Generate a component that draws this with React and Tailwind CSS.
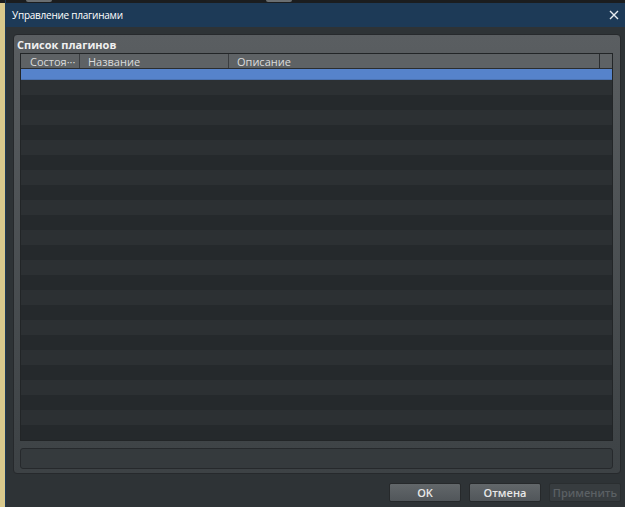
import React from "react";

const rows = Array.from({ length: 24 });

export default function App() {
  return (
    <div
      className="w-[628px] h-[507px] flex bg-white overflow-hidden"
      style={{ fontFamily: "'Open Sans', 'Liberation Sans', sans-serif" }}
    >
      {/* край окна сзади */}
      <div className="w-[5px] h-full flex flex-col">
        <div className="h-[3px] bg-[#1b1d1f]" />
        <div className="flex-1 bg-[#d9c98c]" />
      </div>
      <div className="w-px h-full bg-[#1d3a57]" />

      <div className="w-[619px] h-full flex flex-col bg-[#2e3336]">
        {/* полоска сверху */}
        <div className="h-[3px] bg-[#1b1d1f] flex">
          <div className="ml-[20px] w-[26px] h-[2px] rounded-b bg-[#6a6e71]" />
          <div className="ml-[214px] w-[26px] h-[2px] rounded-b bg-[#6a6e71]" />
        </div>

        {/* заголовок */}
        <div className="h-[24px] bg-[#1d3a57] flex items-center justify-between pl-[6px] pr-[5px]">
          <span className="text-[10px] text-white tracking-tight">Управление плагинами</span>
          <svg width="10" height="10" viewBox="0 0 10 10" className="mr-[1px]">
            <path d="M1 1 L9 9 M9 1 L1 9" stroke="#e8ecf0" strokeWidth="1.4" />
          </svg>
        </div>

        <div className="flex-1 flex flex-col pl-[7px] pr-[4px] pt-[7px]">
          {/* группа */}
          <div className="h-[440px] rounded-[4px] border border-[#26292c] bg-gradient-to-b from-[#5a5e61] to-[#3d4245] flex flex-col pl-[6px] pr-[7px]">
            <div className="h-[18px] pt-[3px] text-[11px] font-bold text-[#f0f0f0] leading-[14px] -ml-[3px]">
              Список плагинов
            </div>

            <div className="h-[388px] border border-[#222527] bg-[#25292c] flex flex-col overflow-hidden">
              <div className="h-[15px] flex bg-[#5e6265] text-[11px] text-[#dcdcdc] leading-[15px] border-b border-[#2a2d30]">
                <div className="w-[59px] pl-[9px] border-r border-[#3a3d40]">Состоя···</div>
                <div className="w-[149px] pl-[8px] border-r border-[#3a3d40]">Название</div>
                <div className="flex-1 pl-[8px] border-r border-[#2a2d30]">Описание</div>
                <div className="w-[12px]" />
              </div>
              <div className="h-[14px] bg-[#5683cb] border-b border-[#4b72b0]" />
              {rows.map((_, i) => (
                <div
                  key={i}
                  className={i % 2 === 0 ? "h-[15px] shrink-0 bg-[#2c3033]" : "h-[15px] shrink-0 bg-[#25292c]"}
                />
              ))}
            </div>

            <div className="mt-[7px] h-[21px] rounded-[3px] border border-[#26292c] bg-[#353a3d]" />
          </div>

          {/* кнопки */}
          <div className="flex justify-end gap-[8px] mt-[9px]">
            <button className="w-[72px] h-[19px] rounded-[2px] border border-[#26292b] bg-gradient-to-b from-[#62676a] to-[#51565a] text-[11px] font-semibold text-[#e8e8e8] leading-none">
              OK
            </button>
            <button className="w-[72px] h-[19px] rounded-[2px] border border-[#26292b] bg-gradient-to-b from-[#62676a] to-[#51565a] text-[11px] font-semibold text-[#e8e8e8] leading-none">
              Отмена
            </button>
            <button className="w-[72px] h-[19px] rounded-[2px] border border-[#2a2e30] bg-[#373c3f] text-[11px] font-semibold text-[#5b6064] leading-none">
              Применить
            </button>
          </div>
        </div>
      </div>
      <div className="flex-1 bg-white" />
    </div>
  );
}
